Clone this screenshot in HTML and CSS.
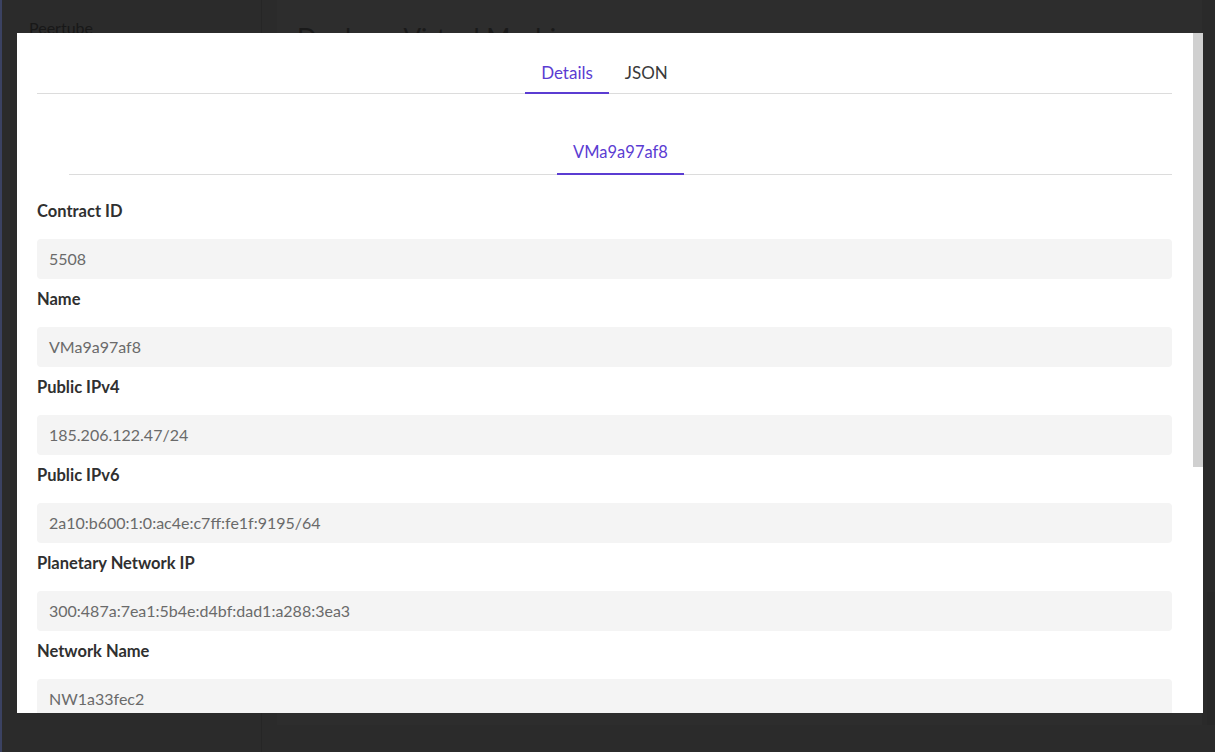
FILE: index.html
```html
<!DOCTYPE html>
<html lang="en">
<head>
<meta charset="utf-8">
<title>Deploy a Virtual Machine</title>
<link rel="stylesheet" href="styles.css">
</head>
<body>
<div class="app">
  <aside class="sidebar">
    <div class="side-item">Peertube</div>
  </aside>
  <main class="main">
    <div class="card">
      <h1 class="page-title">Deploy a Virtual Machine</h1>
    </div>
    <div class="page-scroll">
      <div class="page-scroll-box"></div>
    </div>
  </main>
</div>

<div class="dialog">
  <div class="dialog-body">
    <div class="tabs tabs-top">
      <div class="tab active">Details</div>
      <div class="tab">JSON</div>
    </div>

    <div class="tabs tabs-inner">
      <div class="tab active">VMa9a97af8</div>
    </div>

    <div class="fields">
      <div class="field">
        <div class="label">Contract ID</div>
        <div class="value">5508</div>
      </div>
      <div class="field">
        <div class="label">Name</div>
        <div class="value">VMa9a97af8</div>
      </div>
      <div class="field">
        <div class="label">Public IPv4</div>
        <div class="value">185.206.122.47/24</div>
      </div>
      <div class="field">
        <div class="label">Public IPv6</div>
        <div class="value">2a10:b600:1:0:ac4e:c7ff:fe1f:9195/64</div>
      </div>
      <div class="field">
        <div class="label">Planetary Network IP</div>
        <div class="value">300:487a:7ea1:5b4e:d4bf:dad1:a288:3ea3</div>
      </div>
      <div class="field">
        <div class="label">Network Name</div>
        <div class="value">NW1a33fec2</div>
      </div>
    </div>
  </div>
  <div class="scrollbar">
    <div class="scroll-thumb"></div>
  </div>
</div>
</body>
</html>
```

FILE: styles.css
```css
* { box-sizing: border-box; }

html, body {
  margin: 0;
  height: 100%;
  overflow: hidden;
}

body {
  background: #2b2b2b;
  font-family: Lato, "Noto Sans", "DejaVu Sans", sans-serif;
  border-left: 2px solid #3b4262;
}

.app {
  display: flex;
  height: 752px;
}

.sidebar {
  width: 260px;
  flex: none;
  border-right: 1px solid #262626;
  padding: 17px 0 0 27px;
}

.side-item {
  color: #181818;
  font-size: 16px;
  line-height: 22px;
}

.main {
  flex: 1;
  display: flex;
  padding: 0 0 27px 15px;
}

.card {
  flex: 1;
  background: #2d2d2d;
  padding: 22px 20px 0 20px;
}

.page-title {
  margin: 0;
  font-size: 26px;
  font-weight: 400;
  color: #1a1a1a;
  line-height: 32px;
}

.page-scroll {
  width: 13px;
  flex: none;
  display: flex;
  justify-content: flex-end;
  background: #2a2a2a;
  padding-top: 592px;
}

.page-scroll-box {
  width: 8px;
  height: 133px;
  background: #282828;
}

/* dialog sits over the page */
.dialog {
  position: fixed;
  left: 17px;
  top: 33px;
  width: 1186px;
  height: 680px;
  background: #ffffff;
  overflow: hidden;
  display: flex;
}

.dialog-body {
  flex: 1;
  min-width: 0;
  padding: 16px 21px 0 20px;
}

.scrollbar {
  width: 10px;
  flex: none;
  background: #ffffff;
}

.scroll-thumb {
  height: 434px;
  background: #d0d0d0;
}

.tabs {
  display: flex;
  justify-content: center;
  border-bottom: 1px solid #dcdcdc;
}

.tab {
  height: 44px;
  padding: 2px 16px 0 16px;
  display: flex;
  align-items: center;
  font-size: 17px;
  color: #3a3a3a;
  position: relative;
}

.tab.active {
  color: #5b3cd2;
}

.tab.active::after {
  content: "";
  position: absolute;
  left: 0;
  right: 0;
  bottom: -1px;
  height: 2px;
  background: #5b3cd2;
}

.tabs-inner {
  margin: 36px 0 0 32px;
}

.tabs-inner .tab {
  padding: 0 16px;
  font-size: 16.5px;
}

.fields {
  padding-top: 24px;
}

.field {
  padding-bottom: 8px;
}

.label {
  font-size: 16.5px;
  font-weight: 700;
  line-height: 24px;
  color: #303030;
  margin-bottom: 16px;
}

.value {
  height: 40px;
  background: #f4f4f4;
  border-radius: 4px;
  padding: 0 12px;
  display: flex;
  align-items: center;
  font-size: 16px;
  line-height: 20px;
  padding-bottom: 1px;
  color: #6a6a6a;
}
```
